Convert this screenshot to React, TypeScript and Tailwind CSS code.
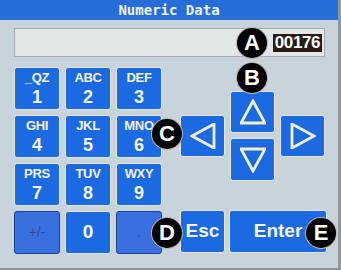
import type { ReactNode } from 'react';

const keys = [
  { letters: '_QZ', digit: '1' },
  { letters: 'ABC', digit: '2' },
  { letters: 'DEF', digit: '3' },
  { letters: 'GHI', digit: '4' },
  { letters: 'JKL', digit: '5' },
  { letters: 'MNO', digit: '6' },
  { letters: 'PRS', digit: '7' },
  { letters: 'TUV', digit: '8' },
  { letters: 'WXY', digit: '9' },
];

const sans = { fontFamily: '"Liberation Sans", Arial, sans-serif' };

const Key = ({ children, className = '', dim = false }: { children?: ReactNode; className?: string; dim?: boolean }) => (
  <div
    className={`flex items-center justify-center rounded-[3px] ${
      dim
        ? 'bg-[#3a6fe0] border border-[#1d3f8f] text-[#2a4b9e]'
        : 'bg-[#1b6ae2] border-[1.5px] border-[#e6e8cf] text-[#f6f4e2]'
    } ${className}`}
  >
    {children}
  </div>
);

const Arrow = ({ dir }: { dir: 'up' | 'down' | 'left' | 'right' }) => {
  const pts = {
    up: '13,2 25,24 1,24',
    down: '1,2 25,2 13,24',
    left: '2,13 24,1 24,25',
    right: '24,13 2,1 2,25',
  }[dir];
  return (
    <svg width="26" height="26" viewBox="0 0 26 26">
      <polygon points={pts} fill="none" stroke="#f2f0c4" strokeWidth="2.8" strokeLinejoin="miter" />
    </svg>
  );
};

const Badge = ({ letter, className }: { letter: string; className: string }) => (
  <div
    className={`absolute w-[32px] h-[32px] rounded-full bg-black border border-white/70 flex items-center justify-center text-white font-bold text-[22px] leading-none ${className}`}
    style={sans}
  >
    {letter}
  </div>
);

const App = () => {
  return (
    <div className="relative w-[341px] h-[270px] overflow-hidden bg-[#c8d3dc] border-r-[3px] border-b-[2px] border-[#8e979e]" style={sans}>
      <div
        className="h-[20px] bg-[#266dd8] flex items-center justify-center text-[14px] font-bold text-[#eef2fa]"
        style={{ fontFamily: '"DejaVu Sans Mono", monospace' }}
      >
        Numeric Data
      </div>

      <div className="mt-[8px] ml-[14px] w-[311px] h-[29px] bg-[#e3e6e6] border border-[#a6adb2] flex items-center justify-end pr-[2px]">
        <div className="h-[18px] px-[2px] bg-[#2b1a14] text-white font-bold text-[17px] leading-none flex items-center tracking-tight">
          00176
        </div>
      </div>

      <div className="flex mt-[10px] ml-[14px]">
        <div className="grid grid-cols-[46px_46px_46px] gap-x-[5px] gap-y-[5px]">
          {keys.map((k) => (
            <Key key={k.digit} className="h-[43px] flex-col">
              <span className="text-[13px] font-bold leading-none tracking-tight">{k.letters}</span>
              <span className="text-[18px] font-bold leading-none mt-[4px]">{k.digit}</span>
            </Key>
          ))}
          <Key dim className="h-[43px] text-[14px]">+/-</Key>
          <Key className="h-[43px] text-[19px] font-bold text-white">0</Key>
          <Key dim className="h-[43px] text-[14px]">.</Key>
        </div>

        <div className="ml-[18px] flex flex-col h-[186px]">
          <div className="mt-[24px] flex gap-[5px] items-center">
            <Key className="w-[45px] h-[42px]">
              <Arrow dir="left" />
            </Key>
            <div className="flex flex-col gap-[5px]">
              <Key className="w-[45px] h-[42px]">
                <Arrow dir="up" />
              </Key>
              <Key className="w-[45px] h-[43px]">
                <Arrow dir="down" />
              </Key>
            </div>
            <Key className="w-[45px] h-[42px]">
              <Arrow dir="right" />
            </Key>
          </div>
          <div className="mt-auto flex gap-[4px]">
            <Key className="w-[45px] h-[43px] text-[19px] font-bold">Esc</Key>
            <Key className="w-[98px] h-[43px] text-[19px] font-bold text-[#e6e6e0]">Enter</Key>
          </div>
        </div>
      </div>

      <Badge letter="A" className="left-[236px] top-[27px]" />
      <Badge letter="B" className="left-[236px] top-[62px]" />
      <Badge letter="C" className="left-[151px] top-[118px]" />
      <Badge letter="D" className="left-[151px] top-[217px]" />
      <Badge letter="E" className="left-[305px] top-[217px]" />
    </div>
  );
};

export default App;
